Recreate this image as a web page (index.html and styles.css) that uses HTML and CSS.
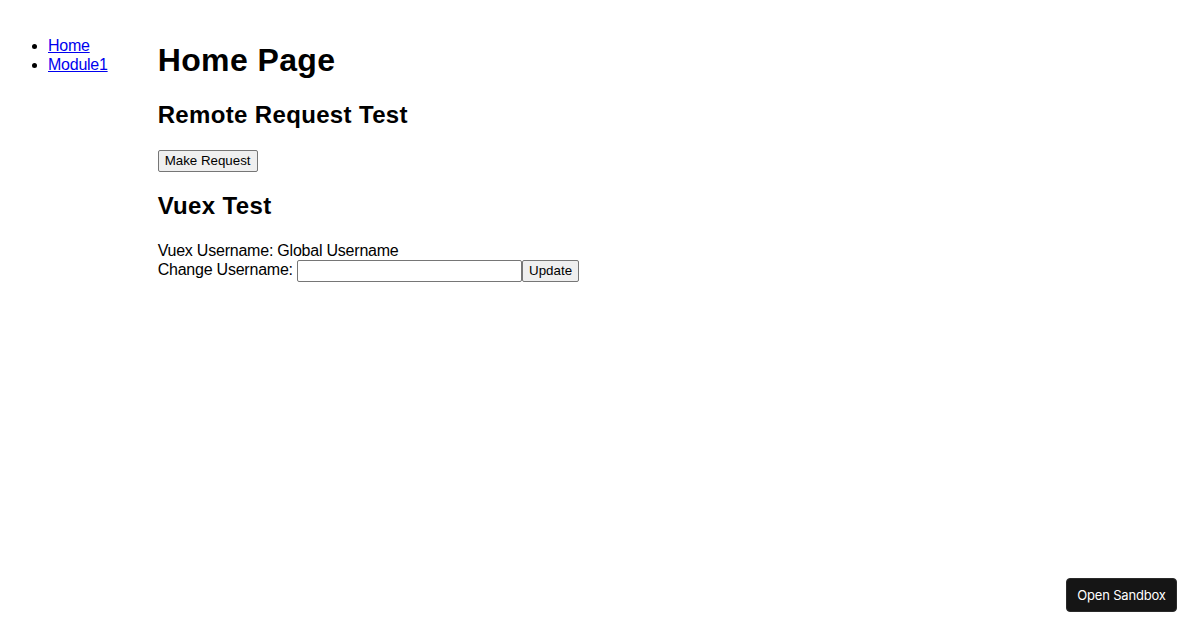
FILE: index.html
```html
<!DOCTYPE html>
<html>
<head>
<meta charset="utf-8">
<title>Home Page</title>
<link rel="stylesheet" href="styles.css">
</head>
<body>
<div class="app">
  <ul class="nav">
    <li><a href="#">Home</a></li>
    <li><a href="#">Module1</a></li>
  </ul>
  <main class="main">
    <h1>Home Page</h1>
    <h2>Remote Request Test</h2>
    <div class="block"><button class="btn">Make Request</button></div>
    <h2>Vuex Test</h2>
    <div class="line">Vuex Username: Global Username</div>
    <div class="line">Change Username: <input class="field" type="text"><button class="btn">Update</button></div>
  </main>
</div>
<button class="sandbox">Open Sandbox</button>
</body>
</html>
```
FILE: styles.css
```css
html, body {
  font-family: "Liberation Sans", Arial, sans-serif;
  color: #000;
  background: #fff;
  line-height: 1.2;
}
body {
  margin: 8px;
}
.app {
  display: flex;
  align-items: flex-start;
  padding-top: 12px;
  gap: 50px;
}
.nav {
  margin: 16px 0;
  padding-left: 40px;
  letter-spacing: -0.25px;
}
.nav a {
  color: #0000ee;
}
.main h1 {
  font-size: 32px;
  margin: 21.44px 0;
  letter-spacing: 0.4px;
}
.main h2 {
  font-size: 24px;
  margin: 19.92px 0;
  letter-spacing: 0.35px;
}
.block {
  margin: 16px 0;
  height: 22px;
}
.line {
  font-size: 16px;
  letter-spacing: -0.22px;
}
.btn {
  font-family: "Liberation Sans", Arial, sans-serif;
  font-size: 13.333px;
  letter-spacing: 0;
  height: 22px;
  padding: 1px 6px;
  border: 1px solid #767676;
  border-radius: 2px;
  background: #efefef;
  color: #000;
  vertical-align: top;
}
.field {
  font-family: "Liberation Sans", Arial, sans-serif;
  font-size: 13.333px;
  width: 225px;
  height: 22px;
  box-sizing: border-box;
  padding: 1px 2px;
  border: 1px solid #767676;
  border-radius: 2px;
  margin: 0;
  vertical-align: top;
}
.sandbox {
  position: fixed;
  right: 23px;
  bottom: 18px;
  width: 111px;
  height: 34px;
  background: #151515;
  color: #fff;
  border: 1px solid #2a2a2a;
  border-radius: 4px;
  font-family: Inter, "Liberation Sans", Arial, sans-serif;
  font-size: 13px;
  letter-spacing: -0.2px;
  padding: 0;
}
```
